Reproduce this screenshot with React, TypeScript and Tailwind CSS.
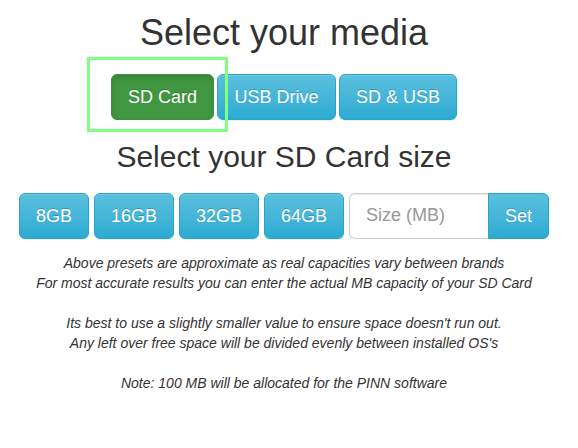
import React from "react";

const blue =
  "h-[46px] px-[16px] text-[18px] leading-[24px] text-white rounded-[6px] border border-[#28a4c9] bg-gradient-to-b from-[#5bc0de] to-[#2aabd2] [text-shadow:0_-1px_0_rgba(0,0,0,0.2)] shadow-[inset_0_1px_0_rgba(255,255,255,0.15),0_1px_1px_rgba(0,0,0,0.075)]";

export default function App() {
  return (
    <div className="w-[578px] h-[448px] bg-white text-[#333] [font-family:'Liberation_Sans',Arial,sans-serif]">
      <div className="w-[568px] flex flex-col items-center">
        <h1 className="mt-[13px] text-[36px] leading-[39.6px] font-normal">Select your media</h1>
        <div className="mt-[21px] flex gap-[3.5px]">
          <div className="relative">
            <button className="h-[46px] px-[16px] text-[18px] leading-[24px] text-white rounded-[6px] border border-[#3e8f3e] bg-[#419641] shadow-[inset_0_3px_5px_rgba(0,0,0,0.125)] [text-shadow:0_-1px_0_rgba(0,0,0,0.2)]">
              SD Card
            </button>
            <div className="pointer-events-none absolute left-[-24px] top-[-17px] w-[141px] h-[75px] border-[3px] border-[#80ff80]" />
          </div>
          <button className={blue}>USB Drive</button>
          <button className={blue}>SD &amp; USB</button>
        </div>
        <h2 className="mt-[20px] text-[30px] leading-[33px] font-normal">Select your SD Card size</h2>
        <div className="mt-[20px] flex gap-[5px]">
          <button className={blue}>8GB</button>
          <button className={blue}>16GB</button>
          <button className={blue}>32GB</button>
          <button className={blue}>64GB</button>
          <div className="flex">
            <input
              type="text"
              placeholder="Size (MB)"
              className="w-[139px] h-[46px] px-[16px] text-[18px] text-[#555] placeholder:text-[#999] border border-[#ccc] border-r-0 rounded-l-[6px] bg-white outline-none shadow-[inset_0_1px_1px_rgba(0,0,0,0.075)] [font-family:'Liberation_Sans',Arial,sans-serif]"
            />
            <button className="h-[46px] w-[61px] text-[18px] leading-[24px] text-white rounded-r-[6px] border border-[#28a4c9] bg-gradient-to-b from-[#5bc0de] to-[#2aabd2] [text-shadow:0_-1px_0_rgba(0,0,0,0.2)]">
              Set
            </button>
          </div>
        </div>
        <div className="mt-[14px] text-[14px] leading-[20px] italic text-center">
          <div>Above presets are approximate as real capacities vary between brands</div>
          <div>For most accurate results you can enter the actual MB capacity of your SD Card</div>
          <div className="h-[20px]" />
          <div>Its best to use a slightly smaller value to ensure space doesn't run out.</div>
          <div>Any left over free space will be divided evenly between installed OS's</div>
          <div className="h-[20px]" />
          <div>Note: 100 MB will be allocated for the PINN software</div>
        </div>
      </div>
    </div>
  );
}
